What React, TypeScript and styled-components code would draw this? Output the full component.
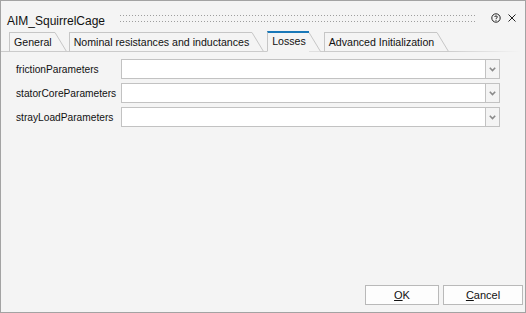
import React from "react";
import styled, { createGlobalStyle } from "styled-components";

const Global = createGlobalStyle`
  html, body { margin: 0; padding: 0; background: #f4f4f4; }
  body { font-family: "Liberation Sans", Arial, sans-serif; }
`;

const Window = styled.div`
  box-sizing: border-box;
  width: 526px;
  height: 313px;
  border: 1px solid #a3a3a3;
  background: #f4f4f4;
  display: flex;
  flex-direction: column;
  color: #111;
`;

const TitleBar = styled.div`
  height: 30px;
  padding: 1px 7px 0 6px;
  display: flex;
  align-items: center;
  box-sizing: border-box;
`;

const Title = styled.span`
  font-size: 12px;
  margin-top: 8px;
  white-space: nowrap;
`;

const Grip = styled.div`
  flex: 1;
  height: 7px;
  margin: 4px 14px 0 15px;
  background-image:
    linear-gradient(to right, #9e9e9e 1px, transparent 1px),
    linear-gradient(to right, #9e9e9e 1px, transparent 1px);
  background-size: 3px 1px, 3px 1px;
  background-repeat: repeat-x, repeat-x;
  background-position: 0 0, 0 6px;
`;

const IconBtn = styled.span<{ $gap?: number }>`
  width: 12px;
  height: 12px;
  display: flex;
  align-items: center;
  justify-content: center;
  margin-left: ${(p) => p.$gap ?? 0}px;
  margin-top: 3px;
`;

const TabBar = styled.div`
  display: flex;
  align-items: flex-end;
  height: 20px;
  padding-left: 8px;
  margin-top: 1px;
  position: relative;
  &::after {
    content: "";
    position: absolute;
    left: 0;
    right: 4px;
    bottom: 0;
    height: 1px;
    background: linear-gradient(to right, #cbcbcb 0%, #cbcbcb 85%, rgba(203,203,203,0) 100%);
  }
`;

const TabWrap = styled.div<{ $gap: number }>`
  display: flex;
  align-items: stretch;
  height: 20px;
  margin-right: ${(p) => p.$gap}px;
  position: relative;
  z-index: 1;
`;

const TabBody = styled.div<{ $active?: boolean }>`
  box-sizing: border-box;
  border-left: 1px solid #c6c6c6;
  border-top: ${(p) => (p.$active ? "2px solid #1978b8" : "1px solid #c6c6c6")};
  border-bottom: 1px solid ${(p) => (p.$active ? "#f4f4f4" : "#cbcbcb")};
  padding: 0 3px 0 4px;
  font-size: 10.6px;
  line-height: ${(p) => (p.$active ? 17 : 18)}px;
  white-space: nowrap;
  background: #f4f4f4;
  margin-top: ${(p) => (p.$active ? -1 : 0)}px;
  height: ${(p) => (p.$active ? 21 : 20)}px;
`;

const Slant = ({ active }: { active?: boolean }) => (
  <svg width="12" height="20" viewBox="0 0 12 20" style={{ display: "block" }}>
    <polygon points="0,0.5 0.5,0.5 11.5,19.5 0,19.5" fill="#f4f4f4" />
    <line x1="0" y1="0.5" x2="11.5" y2="19.5" stroke="#c6c6c6" strokeWidth="1" />
    {!active && <line x1="0" y1="19.5" x2="12" y2="19.5" stroke="#cbcbcb" strokeWidth="1" />}
  </svg>
);

const Form = styled.div`
  display: grid;
  grid-template-columns: 105px 379px;
  row-gap: 4px;
  padding: 7px 0 0 15px;
`;

const Label = styled.div`
  font-size: 10.2px;
  display: flex;
  align-items: center;
  height: 20px;
  white-space: nowrap;
`;

const Combo = styled.div`
  display: flex;
  height: 20px;
`;

const Field = styled.div`
  flex: 1;
  box-sizing: border-box;
  border: 1px solid #c2c2c2;
  background: #ffffff;
`;

const DropBtn = styled.div`
  box-sizing: border-box;
  width: 15px;
  margin-left: -1px;
  border: 1px solid #c2c2c2;
  background: #f4f4f4;
  display: flex;
  align-items: center;
  justify-content: center;
`;

const Spacer = styled.div`
  flex: 1;
`;

const ButtonRow = styled.div`
  display: flex;
  justify-content: flex-end;
  gap: 4px;
  padding: 0 2px 7px 0;
`;

const Button = styled.div<{ $w: number }>`
  box-sizing: border-box;
  width: ${(p) => p.$w}px;
  height: 20px;
  border: 1px solid #b9b9b9;
  background: #fdfdfd;
  font-size: 11px;
  display: flex;
  align-items: center;
  justify-content: center;
  & u { text-decoration: underline; text-underline-offset: 1px; }
`;

const Chevron = () => (
  <svg width="7" height="5" viewBox="0 0 7 5">
    <path d="M0.8 0.8 L3.5 3.5 L6.2 0.8" fill="none" stroke="#8a8a8a" strokeWidth="1.6" />
  </svg>
);

const tabs = [
  { label: "General", gap: 2 },
  { label: "Nominal resistances and inductances", gap: 3 },
  { label: "Losses", gap: 3, active: true },
  { label: "Advanced Initialization", gap: 0 },
];

const rows = ["frictionParameters", "statorCoreParameters", "strayLoadParameters"];

export default function App() {
  return (
    <>
      <Global />
      <Window>
        <TitleBar>
          <Title>AIM_SquirrelCage</Title>
          <Grip />
          <IconBtn>
            <svg width="10" height="10" viewBox="0 0 10 10">
              <circle cx="5" cy="5" r="4.2" fill="none" stroke="#222" strokeWidth="1" />
              <path d="M3.6 4 C3.6 2.6 6.4 2.6 6.4 4 C6.4 4.9 5 4.9 5 5.9" fill="none" stroke="#222" strokeWidth="1" />
              <rect x="4.5" y="6.8" width="1" height="1" fill="#222" />
            </svg>
          </IconBtn>
          <IconBtn $gap={4}>
            <svg width="10" height="10" viewBox="0 0 10 10">
              <path d="M1.5 1.5 L8.5 8.5 M8.5 1.5 L1.5 8.5" stroke="#222" strokeWidth="1" />
            </svg>
          </IconBtn>
        </TitleBar>
        <TabBar>
          {tabs.map((t) => (
            <TabWrap key={t.label} $gap={t.gap}>
              <TabBody $active={t.active}>{t.label}</TabBody>
              <Slant active={t.active} />
            </TabWrap>
          ))}
        </TabBar>
        <Form>
          {rows.map((r) => (
            <React.Fragment key={r}>
              <Label>{r}</Label>
              <Combo>
                <Field />
                <DropBtn>
                  <Chevron />
                </DropBtn>
              </Combo>
            </React.Fragment>
          ))}
        </Form>
        <Spacer />
        <ButtonRow>
          <Button $w={74}>
            <span><u>O</u>K</span>
          </Button>
          <Button $w={80}>
            <span><u>C</u>ancel</span>
          </Button>
        </ButtonRow>
      </Window>
    </>
  );
}
